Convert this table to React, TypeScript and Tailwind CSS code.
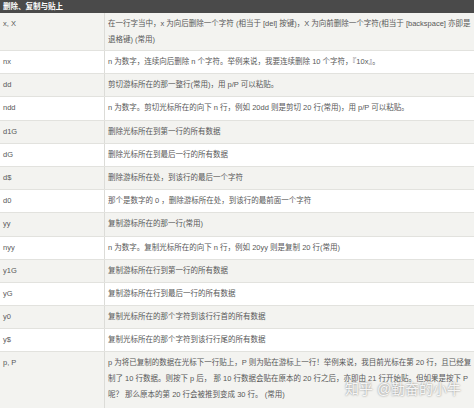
import React from "react";

const rows = [
  { cmd: "nx", desc: "n 为数字，连续向后删除 n 个字符。举例来说，我要连续删除 10 个字符，『10x』。" },
  { cmd: "dd", desc: "剪切游标所在的那一整行(常用)，用 p/P 可以粘贴。" },
  { cmd: "ndd", desc: "n 为数字。剪切光标所在的向下 n 行，例如 20dd 则是剪切 20 行(常用)，用 p/P 可以粘贴。" },
  { cmd: "d1G", desc: "删除光标所在到第一行的所有数据" },
  { cmd: "dG", desc: "删除光标所在到最后一行的所有数据" },
  { cmd: "d$", desc: "删除游标所在处，到该行的最后一个字符" },
  { cmd: "d0", desc: "那个是数字的 0 ，删除游标所在处，到该行的最前面一个字符" },
  { cmd: "yy", desc: "复制游标所在的那一行(常用)" },
  { cmd: "nyy", desc: "n 为数字。复制光标所在的向下 n 行，例如 20yy 则是复制 20 行(常用)" },
  { cmd: "y1G", desc: "复制游标所在行到第一行的所有数据" },
  { cmd: "yG", desc: "复制游标所在行到最后一行的所有数据" },
  { cmd: "y0", desc: "复制光标所在的那个字符到该行行首的所有数据" },
  { cmd: "y$", desc: "复制光标所在的那个字符到该行行尾的所有数据" },
];

function Row({ cmd, lines, light, h }: { cmd: string; lines: string[]; light: boolean; h: string }) {
  return (
    <div className={`flex border-b border-[#e2e2de] ${light ? "bg-[#f3f3f0]" : "bg-white"} ${h}`}>
      <div className="w-[105px] shrink-0 border-r border-[#dcdcd8] pl-[3px] pt-[3px]">{cmd}</div>
      <div className="flex-1 pl-[3px] pt-[3px] whitespace-nowrap">
        {lines.map((l, i) => (
          <div key={i}>{l}</div>
        ))}
      </div>
    </div>
  );
}

export default function App() {
  return (
    <div
      className="relative w-[474px] h-[408px] overflow-hidden bg-white text-[7.5px] leading-[16px] text-[#585858]"
      style={{ fontFamily: '"Liberation Sans", "Noto Sans CJK SC", sans-serif' }}
    >
      <div className="h-[13px] bg-[#4a4a4a] pl-[3px] text-white font-bold leading-[13px]">删除、复制与贴上</div>
      <Row
        cmd="x, X"
        light
        h="h-[38px]"
        lines={[
          "在一行字当中，x 为向后删除一个字符 (相当于 [del] 按键)，X 为向前删除一个字符(相当于 [backspace] 亦即是",
          "退格键) (常用)",
        ]}
      />
      {rows.map((r, i) => (
        <Row key={r.cmd} cmd={r.cmd} lines={[r.desc]} light={i % 2 === 1} h="h-[23.2px]" />
      ))}
      <Row
        cmd="p, P"
        light
        h="h-[60px]"
        lines={[
          "p 为将已复制的数据在光标下一行贴上，P 则为贴在游标上一行！举例来说，我目前光标在第 20 行，且已经复",
          "制了 10 行数据。则按下 p 后， 那 10 行数据会贴在原本的 20 行之后，亦即由 21 行开始贴。但如果是按下 P",
          "呢？ 那么原本的第 20 行会被推到变成 30 行。 (常用)",
        ]}
      />
      <div className="absolute left-[345px] top-[379px] text-[14px] leading-[20px] text-white/90 [text-shadow:0_0_2px_rgba(0,0,0,0.55)]">
        知乎 @勤奋的小牛
      </div>
    </div>
  );
}
